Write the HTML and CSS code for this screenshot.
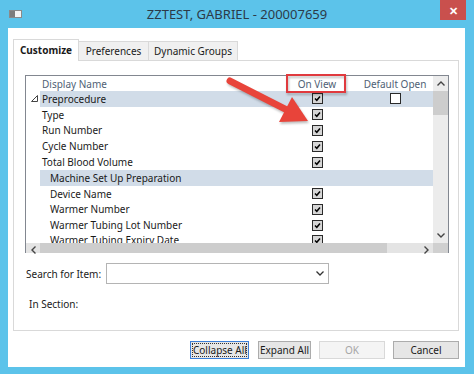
FILE: index.html
```html
<!DOCTYPE html>
<html lang="en">
<head>
    <meta charset="UTF-8">
    <title>ZZTEST, GABRIEL - 200007659</title>
    <link rel="stylesheet" href="styles.css">
</head>
<body>
    <div class="window">
        <div class="titlebar">
            <span class="app-icon"><span></span></span>
            <span class="title">ZZTEST, GABRIEL - 200007659</span>
            <span class="close">&#x2715;</span>
        </div>

        <div class="client">
            <!-- tabs -->
            <div class="tabs">
                <div class="tab active">Customize</div>
                <div class="tab">Preferences</div>
                <div class="tab">Dynamic Groups</div>
            </div>

            <div class="panel">
                <div class="list">
                    <div class="list-main">
                        <div class="rows">
                            <div class="row head">
                                <span class="toggle"></span>
                                <span class="name">Display Name</span>
                                <span class="col-view">On View</span>
                                <span class="col-open">Default Open</span>
                            </div>
                            <div class="row sel">
                                <span class="toggle"><svg width="7" height="7" viewBox="0 0 7 7"><path d="M6.5 0.5 V6.5 H0.5 Z" fill="none" stroke="#444" stroke-width="1"/></svg></span>
                                <span class="name">Preprocedure</span>
                                <span class="col-view"><i class="cb on"></i></span>
                                <span class="col-open"><i class="cb"></i></span>
                            </div>
                            <div class="row">
                                <span class="toggle"></span>
                                <span class="name">Type</span>
                                <span class="col-view"><i class="cb on"></i></span>
                                <span class="col-open"></span>
                            </div>
                            <div class="row">
                                <span class="toggle"></span>
                                <span class="name">Run Number</span>
                                <span class="col-view"><i class="cb on"></i></span>
                                <span class="col-open"></span>
                            </div>
                            <div class="row">
                                <span class="toggle"></span>
                                <span class="name">Cycle Number</span>
                                <span class="col-view"><i class="cb on"></i></span>
                                <span class="col-open"></span>
                            </div>
                            <div class="row">
                                <span class="toggle"></span>
                                <span class="name">Total Blood Volume</span>
                                <span class="col-view"><i class="cb on"></i></span>
                                <span class="col-open"></span>
                            </div>
                            <div class="row sel">
                                <span class="toggle"></span>
                                <span class="name sub">Machine Set Up Preparation</span>
                                <span class="col-view"></span>
                                <span class="col-open"></span>
                            </div>
                            <div class="row">
                                <span class="toggle"></span>
                                <span class="name sub">Device Name</span>
                                <span class="col-view"><i class="cb on"></i></span>
                                <span class="col-open"></span>
                            </div>
                            <div class="row">
                                <span class="toggle"></span>
                                <span class="name sub">Warmer Number</span>
                                <span class="col-view"><i class="cb on"></i></span>
                                <span class="col-open"></span>
                            </div>
                            <div class="row">
                                <span class="toggle"></span>
                                <span class="name sub">Warmer Tubing Lot Number</span>
                                <span class="col-view"><i class="cb on"></i></span>
                                <span class="col-open"></span>
                            </div>
                            <div class="row last">
                                <span class="toggle"></span>
                                <span class="name sub">Warmer Tubing Expiry Date</span>
                                <span class="col-view"><i class="cb on"></i></span>
                                <span class="col-open"></span>
                            </div>
                        </div>
                        <div class="vscroll">
                            <svg class="arrow" width="8" height="5" viewBox="0 0 8 5"><path d="M0.5 4.5 L4 1 L7.5 4.5" fill="none" stroke="#444" stroke-width="1.4"/></svg>
                            <span class="vthumb"></span>
                            <svg class="arrow down" width="8" height="5" viewBox="0 0 8 5"><path d="M0.5 0.5 L4 4 L7.5 0.5" fill="none" stroke="#444" stroke-width="1.4"/></svg>
                        </div>
                    </div>
                    <div class="hscroll">
                        <span class="harrow"><svg width="5" height="8" viewBox="0 0 5 8"><path d="M4.5 0.5 L1 4 L4.5 7.5" fill="none" stroke="#444" stroke-width="1.4"/></svg></span>
                        <span class="hthumb"></span>
                        <span class="harrow right"><svg width="5" height="8" viewBox="0 0 5 8"><path d="M0.5 0.5 L4 4 L0.5 7.5" fill="none" stroke="#444" stroke-width="1.4"/></svg></span>
                        <span class="corner"></span>
                    </div>
                </div>

                <div class="search-row">
                    <label>Search for Item:</label>
                    <div class="combo">
                        <svg width="8" height="5" viewBox="0 0 8 5"><path d="M0.5 0.5 L4 4 L7.5 0.5" fill="none" stroke="#333" stroke-width="1.3"/></svg>
                    </div>
                </div>
                <div class="section">In Section:</div>
            </div>

            <div class="buttons">
                <button class="btn focus"><span>Collapse All</span></button>
                <button class="btn expand">Expand All</button>
                <button class="btn wide disabled">OK</button>
                <button class="btn wide">Cancel</button>
            </div>
        </div>

        <!-- annotation -->
        <svg class="callout" width="474" height="374" viewBox="0 0 474 374">
            <rect x="287" y="75" width="58" height="17" fill="none" stroke="#e03a3e" stroke-width="2"/>
            <line x1="230" y1="81" x2="287" y2="110" stroke="#e8443a" stroke-width="7" stroke-linecap="round"/>
            <polygon points="279,122 292,97 308,121" fill="#e8443a"/>
        </svg>
    </div>
</body>
</html>
```

FILE: styles.css
```css
* {
    box-sizing: border-box;
    margin: 0;
    padding: 0;
}

body {
    width: 474px;
    height: 374px;
    background: #5cc3ea;
    font-family: "Noto Sans", sans-serif;
    font-size: 10px;
    color: #1a1a1a;
    overflow: hidden;
}

.window {
    position: relative;
    height: 374px;
}

.titlebar {
    height: 28px;
    display: flex;
    align-items: center;
    position: relative;
}

.app-icon {
    position: absolute;
    left: 9px;
    top: 10px;
    width: 13px;
    height: 8px;
    background: #f4f4f4;
    border: 1px solid #8a8a8a;
}

    .app-icon span {
        display: block;
        width: 5px;
        height: 6px;
        background: #7d7d7d;
    }

.title {
    flex: 1;
    text-align: center;
    font-size: 13px;
    color: #2c3a48;
}

.close {
    position: absolute;
    right: 8px;
    top: 0;
    width: 26px;
    height: 20px;
    background: #c9504d;
    color: #fff;
    font-size: 11px;
    font-weight: bold;
    display: flex;
    align-items: center;
    justify-content: center;
}

.client {
    background: #fff;
    margin: 0 9px 0 8px;
    height: 339px;
    padding: 11px 6px 0 5px;
}

/* tabs */
.tabs {
    display: flex;
    align-items: flex-end;
    height: 21px;
    position: relative;
    z-index: 1;
}

.tab {
    height: 19px;
    border: 1px solid #d9d9d9;
    border-bottom: none;
    background: #f0f0f0;
    display: flex;
    align-items: center;
    justify-content: center;
    margin-left: -1px;
    white-space: nowrap;
}

    .tab:nth-child(1) { width: 66px; margin-left: 0; }
    .tab:nth-child(2) { width: 71px; }
    .tab:nth-child(3) { width: 90px; }

    .tab.active {
        height: 22px;
        margin-bottom: -1px;
        background: #fff;
        font-weight: bold;
        padding-bottom: 2px;
    }

.panel {
    border: 1px solid #d9d9d9;
    height: 271px;
    padding: 14px 9px 0 11px;
}

/* list */
.list {
    border: 1px solid #828790;
    height: 178px;
    display: flex;
    flex-direction: column;
}

.list-main {
    display: flex;
    height: 167px;
}

.rows {
    flex: 1;
    overflow: hidden;
}

.row {
    display: grid;
    grid-template-columns: 14px 246px 59px 88px;
    height: 15.8px;
    align-items: center;
}

    .row > span {
        height: 100%;
        display: flex;
        align-items: center;
        line-height: 1;
    }

    .row.head {
        height: 15px;
        color: #4f5f75;
    }

    .row.last {
        height: 10px;
        align-items: start;
    }

        .row.last > span {
            align-items: flex-start;
            padding-top: 2px;
        }

    .row.sel > span:not(.toggle) {
        background: #d1dce8;
    }

.toggle {
    justify-content: center;
    padding-left: 3px;
}

.name {
    padding-left: 2px;
    white-space: nowrap;
}

    .name.sub {
        padding-left: 10px;
    }

.col-view {
    justify-content: center;
    padding-left: 3px;
}

.col-open {
    justify-content: center;
    padding-left: 12px;
    white-space: nowrap;
}

.cb {
    display: block;
    width: 11px;
    height: 11px;
    border: 1px solid #2a2a2a;
    background: #fff;
}

    .cb.on {
        background: #d6d6d6 url("data:image/svg+xml,%3Csvg xmlns='http://www.w3.org/2000/svg' width='9' height='9' viewBox='0 0 9 9'%3E%3Cpath d='M2 4.5 L3.8 6.3 L7 2.5' fill='none' stroke='%23000' stroke-width='1.5'/%3E%3C/svg%3E") no-repeat center;
    }

.vscroll {
    width: 15px;
    background: #ececec;
    display: flex;
    flex-direction: column;
    align-items: center;
}

    .vscroll .arrow {
        margin: 5px 0;
    }

    .vscroll .arrow.down {
        margin-top: auto;
    }

.vthumb {
    width: 15px;
    height: 24px;
    background: #cdcdcd;
}

.hscroll {
    height: 10px;
    background: #e4e4e4;
    display: flex;
    align-items: center;
}

.harrow {
    width: 14px;
    display: flex;
    justify-content: center;
    padding-top: 3px;
}

    .harrow.right {
        margin-left: auto;
    }

.hthumb {
    width: 347px;
    height: 10px;
    background: #cdcdcd;
}

.corner {
    width: 15px;
    height: 10px;
    background: #d0d0d0;
}

/* search */
.search-row {
    display: flex;
    align-items: center;
    margin-top: 10px;
    padding-left: 1px;
}

    .search-row label {
        width: 80px;
        white-space: nowrap;
    }

.combo {
    width: 223px;
    height: 21px;
    border: 1px solid #b4b4b4;
    display: flex;
    align-items: center;
    justify-content: flex-end;
    padding-right: 4px;
}

.section {
    margin-top: 13px;
    padding-left: 4px;
}

/* buttons */
.buttons {
    display: flex;
    justify-content: flex-end;
    gap: 8px;
    margin-top: 10px;
}

.btn {
    height: 18px;
    font-family: "Noto Sans", sans-serif;
    font-size: 10px;
    color: #1a1a1a;
    background: #e6e6e6;
    border: 1px solid #acacac;
    white-space: nowrap;
    padding: 0;
}

    .btn.focus {
        width: 59px;
        border-color: #3c7fd8;
        padding: 1px;
    }

        .btn.focus span {
            display: block;
            height: 100%;
            border: 1px dotted #333;
            line-height: 12px;
        }

    .btn.expand {
        width: 53px;
        margin-left: 1px;
    }

    .btn.wide {
        width: 66px;
    }

    .btn.disabled {
        background: #f4f4f4;
        border-color: #d9d9d9;
        color: #a6a6a6;
    }

.callout {
    position: absolute;
    left: 0;
    top: 0;
    pointer-events: none;
    filter: drop-shadow(1px 2px 1px rgba(0, 0, 0, 0.25));
}
```
